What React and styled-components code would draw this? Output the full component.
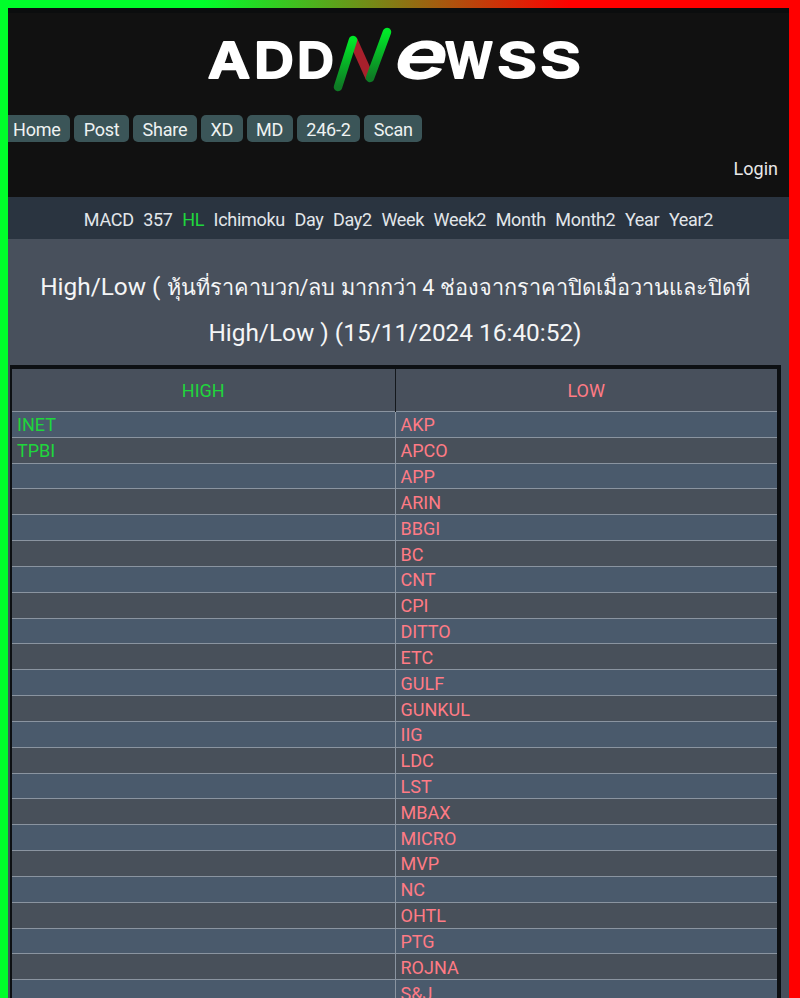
import React from 'react';
import styled, { createGlobalStyle } from 'styled-components';

const navItems = ['Home', 'Post', 'Share', 'XD', 'MD', '246-2', 'Scan'];
const subItems = ['MACD', '357', 'HL', 'Ichimoku', 'Day', 'Day2', 'Week', 'Week2', 'Month', 'Month2', 'Year', 'Year2'];
const highs = ['INET', 'TPBI'];
const lows = ['AKP', 'APCO', 'APP', 'ARIN', 'BBGI', 'BC', 'CNT', 'CPI', 'DITTO', 'ETC', 'GULF', 'GUNKUL', 'IIG', 'LDC', 'LST', 'MBAX', 'MICRO', 'MVP', 'NC', 'OHTL', 'PTG', 'ROJNA', 'S&J'];

// logo letters, x and width in page pixels
const logoLetters = [
  { ch: 'A', x: 208, w: 42 },
  { ch: 'D', x: 254, w: 40 },
  { ch: 'D', x: 297, w: 37 },
  { ch: 'W', x: 445, w: 48 },
  { ch: 'S', x: 497, w: 40 },
  { ch: 'S', x: 540, w: 41 },
];

const GlobalStyle = createGlobalStyle`
  html, body {
    margin: 0;
    padding: 0;
    height: 998px;
    overflow: hidden;
    background: #000;
  }
  body {
    font-family: Roboto, "Noto Sans", sans-serif;
  }
`;

const Frame = styled.div`
  box-sizing: border-box;
  height: 998px;
  overflow: hidden;
  border-style: solid;
  border-width: 8px 11px 0 8px;
  border-image: linear-gradient(to right, #00ff2a 0%, #00ff2a 25%, #ff0000 72%, #ff0000 100%) 1;
  background: #0b0d0e;
  padding-top: 5px;
`;

const Header = styled.header`
  background: #111111;
  height: 184px;
  display: flex;
  flex-direction: column;
`;

const LogoRow = styled.div`
  display: flex;
  justify-content: center;
  height: 102px;
  padding-right: 7px;
`;

const LogoText = styled.text`
  font-family: "Inter", sans-serif;
  font-weight: 600;
  font-size: 50px;
  fill: #fff;
  stroke: #fff;
  stroke-width: 2px;
  stroke-linejoin: round;
`;

const LogoE = styled(LogoText)`
  font-weight: 500;
  font-size: 66px;
`;

const NavRow = styled.nav`
  display: flex;
  gap: 4px;
`;

const NavButton = styled.a`
  display: block;
  background: #3b5558;
  color: #eef2f2;
  font-size: 18px;
  letter-spacing: -0.2px;
  line-height: 27px;
  padding: 1px 9.5px 0;
  height: 26px;
  border-radius: 5px;
  &:first-child {
    border-radius: 0 5px 5px 0;
    padding-left: 5px;
  }
`;

const LoginRow = styled.div`
  display: flex;
  justify-content: flex-end;
  padding: 13px 11px 0 0;
  color: #e8e8e8;
  font-size: 18px;
  line-height: 27px;
`;

const SubNav = styled.nav`
  display: flex;
  justify-content: center;
  gap: 9.5px;
  height: 40px;
  padding-top: 2px;
  align-items: center;
  background: #2a3440;
  font-size: 18px;
  letter-spacing: -0.3px;
`;

const SubLink = styled.a`
  color: ${p => (p.$active ? '#1fd63c' : '#e2e6ea')};
`;

const Panel = styled.main`
  background: #48505c;
  padding-bottom: 20px;
`;

const Title = styled.h1`
  margin: 0;
  padding: 25px 19px 10px 12px;
  text-align: center;
  color: #f4f5f6;
  font-size: 24.4px;
  font-weight: 400;
  line-height: 45px;
`;

const ThaiText = styled.span`
  font-size: 21.7px;
`;

const DataTable = styled.table`
  box-sizing: border-box;
  width: 771px;
  margin-left: 2px;
  border-collapse: collapse;
  table-layout: fixed;
  border-top: 4px solid #0d1013;
  border-left: 2px solid #0d1013;
  border-right: 4px solid #0d1013;
`;

const HeadCell = styled.th`
  height: 42px;
  padding: 0;
  font-weight: 400;
  font-size: 18px;
  background: #48505c;
  color: ${p => (p.$low ? '#ff7b85' : '#1fd63c')};
  border-left: ${p => (p.$low ? '1px solid #14181c' : 'none')};
`;

const Row = styled.tr`
  height: 25.83px;
  background: ${p => (p.$odd ? '#4a5a6c' : '#48505a')};
`;

const Cell = styled.td`
  box-sizing: border-box;
  padding: 2px 5px 0;
  font-size: 18px;
  line-height: 22px;
  border-top: 1px solid #8a94a0;
  color: ${p => (p.$low ? '#ff7b85' : '#1fd63c')};
  border-left: ${p => (p.$low ? '1px solid #8a94a0' : 'none')};
`;

const App = () => {
  return (
    <Frame>
      <GlobalStyle />
      <Header>
        <LogoRow>
          <svg width="374" height="80" viewBox="208 13 374 80" style={{ flex: 'none' }}>
            <defs>
              <linearGradient id="up" x1="0" y1="0" x2="0" y2="1">
                <stop offset="0" stopColor="#00e828" />
                <stop offset="1" stopColor="#0f7a25" />
              </linearGradient>
            </defs>
            {logoLetters.map((l, i) => (
              <LogoText key={i} x={l.x} y="78" textLength={l.w} lengthAdjust="spacingAndGlyphs">{l.ch}</LogoText>
            ))}
            <LogoE x="0" y="0" textLength="52" lengthAdjust="spacingAndGlyphs" transform="translate(391 78) skewX(-14)">e</LogoE>
            <path d="M353 40 L370 78" stroke="#a8202c" strokeWidth="9" fill="none" />
            <path d="M353 40 L338 87" stroke="url(#up)" strokeWidth="8.5" strokeLinecap="round" fill="none" />
            <path d="M387 32 L370 78" stroke="url(#up)" strokeWidth="8.5" strokeLinecap="round" fill="none" />
          </svg>
        </LogoRow>
        <NavRow>
          {navItems.map(item => <NavButton key={item}>{item}</NavButton>)}
        </NavRow>
        <LoginRow>Login</LoginRow>
      </Header>
      <SubNav>
        {subItems.map(item => <SubLink key={item} $active={item === 'HL'}>{item}</SubLink>)}
      </SubNav>
      <Panel>
        <Title>High/Low ( <ThaiText>หุ้นที่ราคาบวก/ลบ มากกว่า 4 ช่องจากราคาปิดเมื่อวานและปิดที่</ThaiText> High/Low ) (15/11/2024 16:40:52)</Title>
        <DataTable>
          <thead>
            <tr>
              <HeadCell>HIGH</HeadCell>
              <HeadCell $low>LOW</HeadCell>
            </tr>
          </thead>
          <tbody>
            {lows.map((low, i) => (
              <Row key={low} $odd={i % 2 === 0}>
                <Cell>{highs[i]}</Cell>
                <Cell $low>{low}</Cell>
              </Row>
            ))}
          </tbody>
        </DataTable>
      </Panel>
    </Frame>
  );
};

export default App;
